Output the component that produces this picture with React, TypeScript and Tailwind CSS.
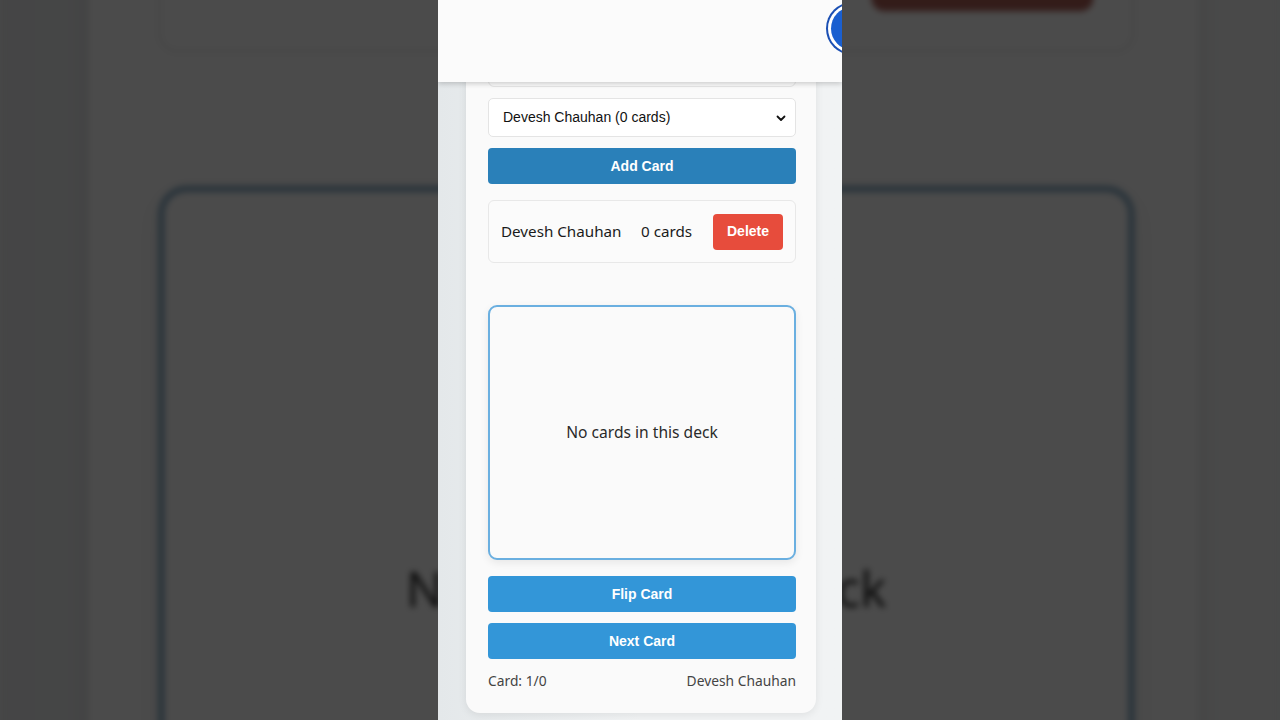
import React from "react";

const seg = { fontFamily: '"Noto Sans", "Open Sans", sans-serif' };
const arial = { fontFamily: '"Liberation Sans", Arial, sans-serif' };

function Screen() {
  return (
    <div className="relative w-[404px] h-[720px] shrink-0 overflow-hidden bg-gradient-to-r from-[#e4e8ea] via-[#f1f3f4] to-[#f1f3f4]">
      <div className="flex flex-col pl-[28px] pr-[26px]">
        <div className="flex flex-col w-[350px] h-[713px] bg-[#fafafa] rounded-b-[14px] shadow-[0_2px_8px_rgba(0,0,0,0.08)] pl-[22px] pr-[20px] pt-[47px]">
          <div className="h-[40px] rounded-[6px] border border-[#e6e6e6] bg-[#fbfbfb]" />
          <div className="mt-[11px] h-[39px] rounded-[5px] border border-[#e4e4e4] bg-white flex items-center justify-between pl-[14px] pr-[8px] text-[14px] text-[#111]" style={arial}>
            <span>Devesh Chauhan (0 cards)</span>
            <svg width="12" height="12" viewBox="0 0 12 12" fill="none">
              <path d="M2.5 4.5 L6 8 L9.5 4.5" stroke="#111" strokeWidth="1.8" strokeLinecap="round" strokeLinejoin="round" />
            </svg>
          </div>
          <div className="mt-[11px] h-[36px] rounded-[4px] bg-[#2a80b9] flex items-center justify-center text-white font-bold text-[14px]" style={arial}>
            Add Card
          </div>
          <div className="mt-[16px] h-[63px] rounded-[6px] border border-[#e8e8e8] bg-[#fbfbfb] flex items-center pl-[12px] pr-[12px]">
            <span className="text-[15.2px] text-[#1a1a1a] w-[140px]" style={seg}>Devesh Chauhan</span>
            <span className="text-[15.2px] text-[#1a1a1a]" style={seg}>0 cards</span>
            <div className="ml-auto w-[70px] h-[36px] rounded-[4px] bg-[#e74c3c] flex items-center justify-center text-white font-bold text-[14px]" style={arial}>
              Delete
            </div>
          </div>
          <div className="mt-[42px] h-[255px] rounded-[9px] border-2 border-[#6aafe0] bg-[#fafafa] shadow-[0_3px_8px_rgba(0,0,0,0.08)] flex items-center justify-center">
            <span className="text-[15.6px] text-[#2a2a2a]" style={seg}>No cards in this deck</span>
          </div>
          <div className="mt-[16px] h-[36px] rounded-[4px] bg-[#3396d8] flex items-center justify-center text-white font-bold text-[14px]" style={arial}>
            Flip Card
          </div>
          <div className="mt-[11px] h-[36px] rounded-[4px] bg-[#3396d8] flex items-center justify-center text-white font-bold text-[14px]" style={arial}>
            Next Card
          </div>
          <div className="mt-[12px] flex justify-between text-[13.8px] text-[#444]" style={seg}>
            <span>Card: 1/0</span>
            <span>Devesh Chauhan</span>
          </div>
        </div>
      </div>
      <div className="absolute top-0 left-0 w-[404px] h-[82px] bg-[#fbfbfb] shadow-[0_2px_5px_rgba(0,0,0,0.18)]">
        <div className="absolute left-[388px] top-[2px] w-[53px] h-[53px] rounded-full bg-[#1b4fb3] p-[2px]">
          <div className="w-full h-full rounded-full bg-white p-[3px]">
            <div className="w-full h-full rounded-full bg-[#1a5fd0]" />
          </div>
        </div>
      </div>
    </div>
  );
}

export default function App() {
  return (
    <div className="relative w-[1280px] h-[720px] overflow-hidden bg-[#4a4a4a]">
      <div className="absolute inset-0 flex justify-center items-center">
        <div className="shrink-0 origin-center scale-[3.17] blur-[1px] brightness-[0.3] saturate-[0.5]">
          <Screen />
        </div>
      </div>
      <div className="relative flex justify-center">
        <Screen />
      </div>
    </div>
  );
}
